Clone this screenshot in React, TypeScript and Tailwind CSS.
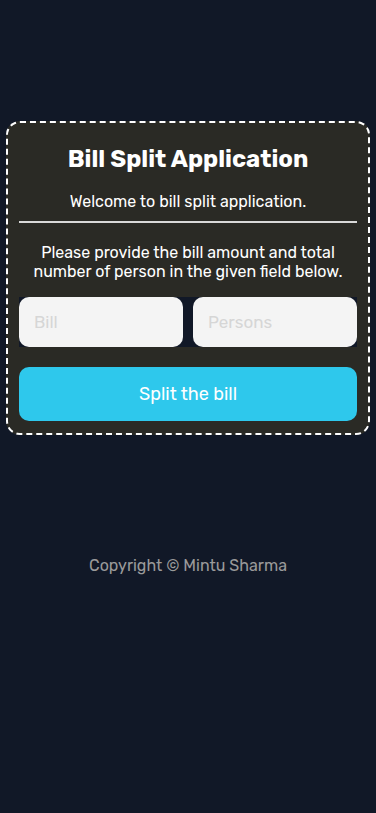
import React from "react";

export default function App() {
  return (
    <div className="min-h-[813px] w-full bg-[#111827] flex flex-col items-center" style={{ fontFamily: "Rubik, Roboto, 'Noto Sans', sans-serif" }}>
      <div className="mt-[121px] w-[364px] rounded-[14px] border-2 border-dashed border-white bg-[#2a2a25] px-[11px] pt-[20px] pb-[12px]">
        <h1 className="text-center text-[24px] font-bold leading-[32px] text-white">Bill Split Application</h1>
        <p className="mt-[15px] text-center text-[16px] leading-[24px] text-white">Welcome to bill split application.</p>
        <div className="mt-[7px] h-[2px] w-full bg-[#d9d9d9]" />
        <p className="mt-[20px] text-center text-[16px] leading-[19px] text-white">Please provide the bill amount and total number of person in the given field below.</p>
        <div className="mt-[16px] flex gap-[10px] bg-[#111827]">
          <input className="h-[50px] w-0 flex-1 rounded-[10px] bg-[#f4f4f4] px-[15px] text-[17px] text-gray-800 outline-none placeholder:text-[#d6d6d6]" placeholder="Bill" />
          <input className="h-[50px] w-0 flex-1 rounded-[10px] bg-[#f4f4f4] px-[15px] text-[17px] text-gray-800 outline-none placeholder:text-[#d6d6d6]" placeholder="Persons" />
        </div>
        <button className="mt-[20px] h-[54px] w-full rounded-[10px] bg-[#2ec8ec] text-[18px] text-white">Split the bill</button>
      </div>
      <p className="mt-[119px] text-[16px] text-[#9a9a9a]">Copyright © Mintu Sharma</p>
    </div>
  );
}
